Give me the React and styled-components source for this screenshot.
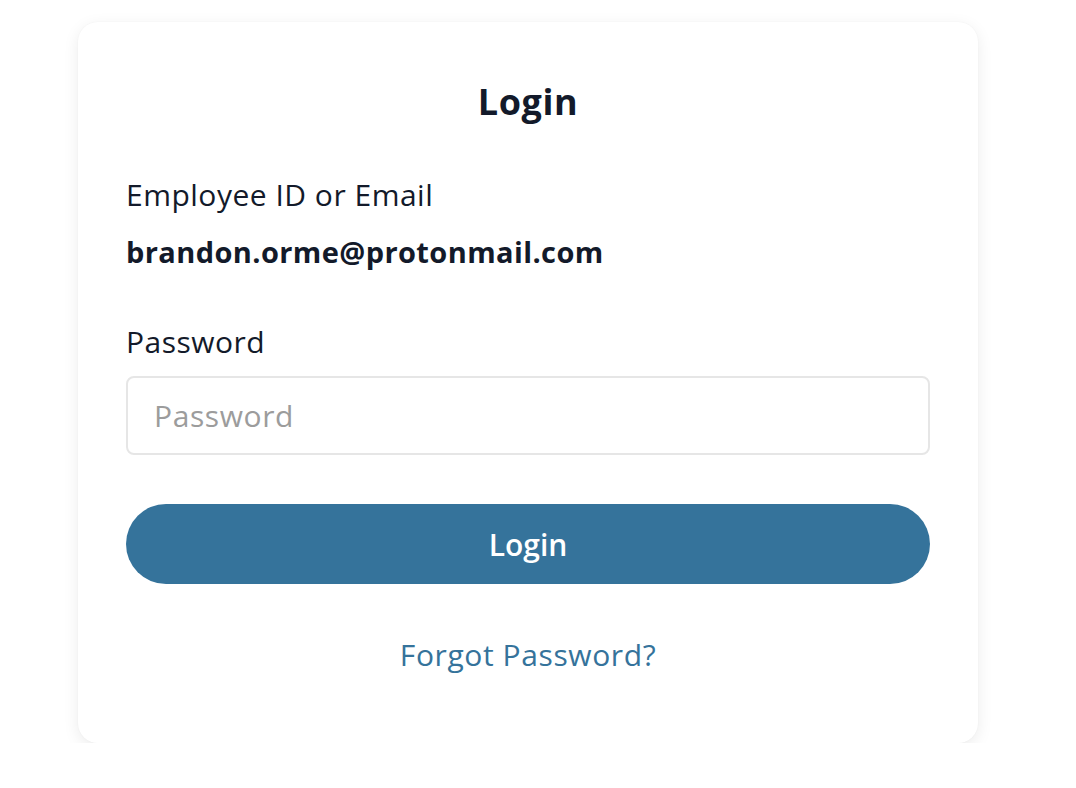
import styled, { createGlobalStyle } from 'styled-components';

const GlobalStyle = createGlobalStyle`
  body {
    margin: 0;
    background: #fff;
    font-family: 'Open Sans', 'Noto Sans', sans-serif;
    color: #131a2a;
  }
`;

const Page = styled.div`
  padding: 22px 0 0 78px;
`;

const Card = styled.form`
  box-sizing: border-box;
  width: 900px;
  padding: 60px 48px 70px;
  background: #fff;
  border-radius: 20px;
  box-shadow: 0 4px 16px rgba(0, 0, 0, 0.08), 0 0 2px rgba(0, 0, 0, 0.04);
  display: flex;
  flex-direction: column;
`;

const Title = styled.h1`
  margin: 0 0 55px;
  font-size: 36px;
  line-height: 40px;
  font-weight: 700;
  letter-spacing: 0.6px;
  text-align: center;
`;

const Label = styled.label`
  display: block;
  font-size: 30px;
  line-height: 36px;
  font-weight: 400;
  letter-spacing: 0.5px;
  margin-bottom: ${(p) => p.$gap || 0}px;
`;

const Value = styled.div`
  font-size: 29px;
  line-height: 36px;
  font-weight: 700;
  letter-spacing: 0.4px;
  margin: 21px 0 54px;
`;

const Input = styled.input`
  box-sizing: border-box;
  width: 100%;
  height: 79px;
  padding: 0 26px;
  border: 2px solid #e6e6e6;
  border-radius: 8px;
  font-family: inherit;
  font-size: 30px;
  letter-spacing: 0.6px;
  color: #131a2a;
  outline: none;

  &::placeholder {
    color: #9c9c9c;
  }
`;

const Button = styled.button`
  margin-top: 49px;
  height: 80px;
  border: none;
  border-radius: 40px;
  background: #35739b;
  color: #fff;
  font-family: inherit;
  font-size: 30px;
  font-weight: 600;
  cursor: pointer;
`;

const Link = styled.a`
  margin-top: 53px;
  font-size: 30px;
  line-height: 36px;
  letter-spacing: 0.6px;
  color: #35739b;
  text-align: center;
  text-decoration: none;
`;

export default function App() {
  return (
    <>
      <GlobalStyle />
      <Page>
        <Card onSubmit={(e) => e.preventDefault()}>
          <Title>Login</Title>
          <Label>Employee ID or Email</Label>
          <Value>brandon.orme@protonmail.com</Value>
          <Label $gap={16} htmlFor="password">Password</Label>
          <Input id="password" type="password" placeholder="Password" />
          <Button type="submit">Login</Button>
          <Link href="#">Forgot Password?</Link>
        </Card>
      </Page>
    </>
  );
}
